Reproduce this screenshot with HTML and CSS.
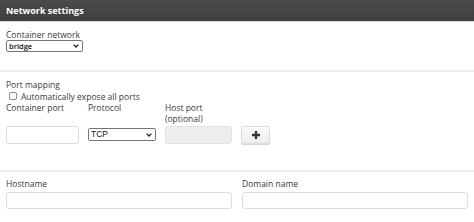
FILE: index.html
```html
<!DOCTYPE html>
<html lang="en">
<head>
<meta charset="UTF-8">
<title>Network settings</title>
<link rel="stylesheet" href="styles.css">
</head>
<body>
<div class="panel">
  <div class="panel-header">Network settings</div>

  <div class="section network">
    <label class="field-label" for="network">Container network</label>
    <div class="select-wrap small">
      <select id="network" class="select-small">
        <option>bridge</option>
      </select>
      <svg class="chevron" width="6" height="4" viewBox="0 0 6 4"><path d="M0.6 0.6L3 3L5.4 0.6" fill="none" stroke="#222" stroke-width="1.3"/></svg>
    </div>
  </div>

  <div class="section ports">
    <div class="field-label">Port mapping</div>
    <label class="check-row">
      <input type="checkbox" id="exposeAll">
      <span>Automatically expose all ports</span>
    </label>
    <div class="port-row">
      <div class="port-col col-container">
        <div class="col-label">Container port</div>
        <input type="text" class="text-input">
      </div>
      <div class="port-col col-proto">
        <div class="col-label">Protocol</div>
        <div class="select-wrap proto">
          <select class="select-proto">
            <option>TCP</option>
          </select>
          <svg class="chevron" width="6" height="4" viewBox="0 0 6 4"><path d="M0.6 0.6L3 3L5.4 0.6" fill="none" stroke="#222" stroke-width="1.3"/></svg>
        </div>
      </div>
      <div class="port-col col-host">
        <div class="col-label">Host port<br>(optional)</div>
        <input type="text" class="text-input" disabled>
      </div>
      <div class="port-col">
        <div class="col-label"></div>
        <button type="button" class="add-btn" title="Add">
          <svg width="8" height="8" viewBox="0 0 8 8"><path d="M2.8 0h2.4v2.8H8v2.4H5.2V8H2.8V5.2H0V2.8h2.8z" fill="#333"/></svg>
        </button>
      </div>
    </div>
  </div>

  <div class="section names">
    <div class="name-row">
      <div class="name-col">
        <label class="field-label" for="hostname">Hostname</label>
        <input type="text" id="hostname" class="text-input">
      </div>
      <div class="name-col">
        <label class="field-label" for="domain">Domain name</label>
        <input type="text" id="domain" class="text-input">
      </div>
    </div>
  </div>
</div>
</body>
</html>
```

FILE: styles.css
```css
body {
  margin: 0;
  font-family: "Open Sans", sans-serif;
  font-size: 8.5px;
  color: #3a3a3a;
  background-color: #fff;
}

.panel {
  width: 474px;
}

.panel-header {
  height: 21px;
  line-height: 21px;
  padding: 0 6px;
  background: linear-gradient(#4b4b4b, #3f3f3f);
  border-bottom: 1px solid #d8d8d8;
  color: #fff;
  font-weight: 700;
  font-size: 9px;
}

.section {
  padding: 7px 6px 0 6px;
  border-bottom: 2px solid #eeeeee;
}

.section.network {
  padding-bottom: 18px;
}

.section.ports {
  padding-bottom: 26px;
}

.section.names {
  padding-top: 6px;
  border-bottom: none;
}

.field-label {
  display: block;
  line-height: 11px;
}

.select-wrap {
  position: relative;
}

.select-wrap.small {
  width: 77px;
}

.select-wrap.proto {
  margin-top: 2px;
}

.select-wrap select {
  -webkit-appearance: none;
  appearance: none;
  display: block;
  width: 100%;
  box-sizing: border-box;
  border: 1px solid #767676;
  border-radius: 2px;
  background: #fff;
  color: #111;
}

.select-small {
  height: 12px;
  padding: 0 0 0 2px;
  font-family: "Open Sans", sans-serif;
  font-weight: 600;
  font-size: 7.5px;
  line-height: 10px;
}

.select-proto {
  height: 13px;
  padding: 0 0 0 2px;
  font-family: "Liberation Sans", sans-serif;
  font-size: 8.5px;
  line-height: 11px;
}

.chevron {
  position: absolute;
  right: 4px;
  top: 50%;
  margin-top: -2px;
}

.check-row {
  display: flex;
  align-items: center;
  gap: 4px;
  height: 12px;
  margin-left: 3px;
}

.check-row input {
  -webkit-appearance: none;
  appearance: none;
  width: 8px;
  height: 8px;
  margin: 0;
  border: 1px solid #8a8a8a;
  border-radius: 2px;
  background: #fff;
}

.port-row {
  display: flex;
  gap: 9px;
}

.port-col {
  display: flex;
  flex-direction: column;
}

.col-container {
  width: 73px;
}

.col-proto {
  width: 68px;
}

.col-host {
  width: 67px;
}

.col-label {
  height: 22px;
  line-height: 11px;
  margin-bottom: 2px;
  white-space: nowrap;
}

.text-input {
  width: 100%;
  height: 18px;
  padding: 0 4px;
  box-sizing: border-box;
  border: 1px solid #dddddd;
  border-radius: 3px;
  font-family: "Open Sans", sans-serif;
  font-size: 8px;
  background: #fff;
}

.text-input:disabled {
  background: #eeeeee;
  border-color: #e2e2e2;
}

.add-btn {
  width: 29px;
  height: 18px;
  padding: 0;
  border: 1px solid #dddddd;
  border-radius: 2px;
  background: linear-gradient(#fbfbfb, #ececec);
  box-shadow: 0 1px 1px rgba(0, 0, 0, 0.18);
  display: flex;
  justify-content: center;
  align-items: center;
}

.name-row {
  display: flex;
  gap: 10px;
}

.name-col {
  flex: 1;
}

.name-col .field-label {
  margin-bottom: 3px;
}

.name-col .text-input {
  height: 17px;
}
```
